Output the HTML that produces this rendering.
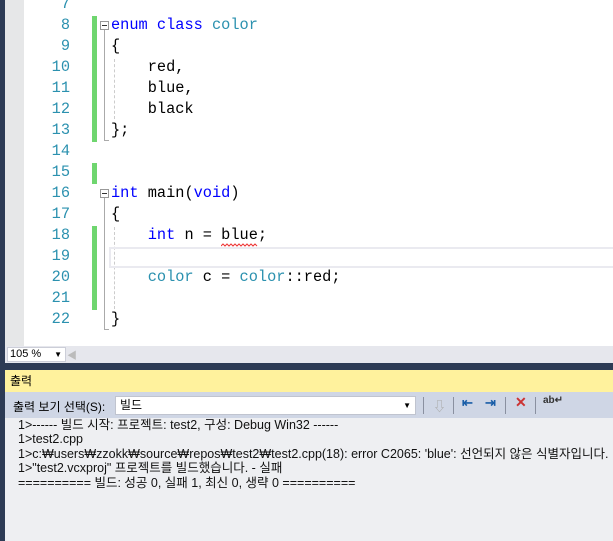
<!DOCTYPE html>
<html><head><meta charset="utf-8"><style>
*{margin:0;padding:0;box-sizing:border-box}
body{width:613px;height:541px;overflow:hidden;background:#2d3b55;position:relative;font-family:"Liberation Sans","Noto Sans CJK KR",sans-serif}
#ed{position:absolute;left:5px;top:0;width:608px;height:346px;background:#fff;overflow:hidden}
#gut{position:absolute;left:0;top:0;width:19px;height:346px;background:#e6e7e8}
.ln{position:absolute;left:19px;width:46px;text-align:right;font:15.3px "Liberation Mono",monospace;color:#2b91af;height:21px;line-height:21px}
.cd{position:absolute;left:106px;font:15.3px "Liberation Mono",monospace;color:#000;white-space:pre;height:21px;line-height:21px}
.k{color:#0000ff}.t{color:#2b91af}
.g{position:absolute;left:87px;width:5px;background:#6fd66f}
#zb{position:absolute;left:5px;top:346px;width:608px;height:17px;background:#e6e7ed}
#zbox{position:absolute;left:2px;top:1px;width:59px;height:15px;background:#fff;border:1px solid #ccced8;font-size:11px;line-height:13px;padding-left:2px}
#hd{position:absolute;left:5px;top:370px;width:608px;height:22px;background:#fff29d;font-size:12px;line-height:22px;padding-left:5px}
#tb{position:absolute;left:5px;top:392px;width:608px;height:26px;background:#cfd6e5;font-size:12px}
#out{position:absolute;left:5px;top:418px;width:608px;height:123px;background:#eeeff2;font:12.5px "Liberation Sans","Noto Sans CJK KR",sans-serif;color:#111}
#out div{position:absolute;left:13px;white-space:pre;height:14px;line-height:14px}
.sep{position:absolute;top:5px;width:1px;height:17px;background:#8a90a0}
</style></head><body>
<div id="ed">
<div id="gut"></div>
<div class="ln" style="top:-6px">7</div>
<div class="ln" style="top:15px">8</div>
<div class="ln" style="top:36px">9</div>
<div class="ln" style="top:57px">10</div>
<div class="ln" style="top:78px">11</div>
<div class="ln" style="top:99px">12</div>
<div class="ln" style="top:120px">13</div>
<div class="ln" style="top:141px">14</div>
<div class="ln" style="top:162px">15</div>
<div class="ln" style="top:183px">16</div>
<div class="ln" style="top:204px">17</div>
<div class="ln" style="top:225px">18</div>
<div class="ln" style="top:246px">19</div>
<div class="ln" style="top:267px">20</div>
<div class="ln" style="top:288px">21</div>
<div class="ln" style="top:309px">22</div>
<div class="g" style="top:16px;height:126px"></div>
<div class="g" style="top:163px;height:21px"></div>
<div class="g" style="top:226px;height:84px"></div>
<div style="position:absolute;left:95px;top:21px;width:9px;height:9px;border:1px solid #999;background:#fff"></div>
<div style="position:absolute;left:97px;top:25px;width:5px;height:1px;background:#333"></div>
<div style="position:absolute;left:99px;top:30px;width:1px;height:111px;background:#aaa"></div>
<div style="position:absolute;left:99px;top:140px;width:5px;height:1px;background:#aaa"></div>
<div style="position:absolute;left:95px;top:189px;width:9px;height:9px;border:1px solid #999;background:#fff"></div>
<div style="position:absolute;left:97px;top:193px;width:5px;height:1px;background:#333"></div>
<div style="position:absolute;left:99px;top:198px;width:1px;height:132px;background:#aaa"></div>
<div style="position:absolute;left:99px;top:329px;width:5px;height:1px;background:#aaa"></div>
<div style="position:absolute;left:109px;top:59px;width:0;height:60px;border-left:1px dashed #ccc"></div>
<div style="position:absolute;left:109px;top:227px;width:0;height:82px;border-left:1px dashed #ccc"></div>
<div style="position:absolute;left:104px;top:247px;width:510px;height:21px;border:2px solid #eaeaf0;border-right:none"></div>
<div class="cd" style="top:15px"><span class="k">enum</span> <span class="k">class</span> <span class="t">color</span></div>
<div class="cd" style="top:36px">{</div>
<div class="cd" style="top:57px">    red,</div>
<div class="cd" style="top:78px">    blue,</div>
<div class="cd" style="top:99px">    black</div>
<div class="cd" style="top:120px">};</div>
<div class="cd" style="top:183px"><span class="k">int</span> main(<span class="k">void</span>)</div>
<div class="cd" style="top:204px">{</div>
<div class="cd" style="top:225px">    <span class="k">int</span> n = blue;</div>
<svg style="position:absolute;left:216px;top:243px" width="37" height="4"><polyline points="0,3 2,1 4,3 6,1 8,3 10,1 12,3 14,1 16,3 18,1 20,3 22,1 24,3 26,1 28,3 30,1 32,3 34,1 36,3" fill="none" stroke="#e33" stroke-width="1"/></svg>
<div class="cd" style="top:267px">    <span class="t">color</span> c = <span class="t">color</span>::red;</div>
<div class="cd" style="top:309px">}</div>
</div>
<div id="zb"><div id="zbox">105 %<span style="position:absolute;right:3px;top:0;font-size:8px">▼</span></div><span style="position:absolute;left:62px;top:1px;color:#bbb;font-size:10px">◀</span></div>
<div id="hd">출력</div>
<div id="tb">
<span style="position:absolute;left:8px;top:6px">출력 보기 선택(S):</span>
<div style="position:absolute;left:110px;top:4px;width:301px;height:19px;background:#fff;border:1px solid #c0c4cf;padding-left:4px;line-height:17px">빌드<span style="position:absolute;right:4px;top:0;font-size:8px">▼</span></div>
<div class="sep" style="left:418px"></div>
<span style="position:absolute;left:428px;top:4px;color:#aaa;font-size:13px">⇩</span>
<div class="sep" style="left:448px"></div>
<span style="position:absolute;left:457px;top:3px;color:#1a5ea8;font-size:13px;font-weight:bold">⇤</span>
<span style="position:absolute;left:480px;top:3px;color:#1a5ea8;font-size:13px;font-weight:bold">⇥</span>
<div class="sep" style="left:500px"></div>
<span style="position:absolute;left:510px;top:2px;color:#c33;font-size:14px;font-weight:bold">✕</span>
<div class="sep" style="left:530px"></div>
<span style="position:absolute;left:538px;top:3px;font-size:10px;font-weight:bold;color:#333">ab↵</span>
</div>
<div id="out">
<div style="top:0">1&gt;------ 빌드 시작: 프로젝트: test2, 구성: Debug Win32 ------</div>
<div style="top:14px">1&gt;test2.cpp</div>
<div style="top:29px">1&gt;c:₩users₩zzokk₩source₩repos₩test2₩test2.cpp(18): error C2065: 'blue': 선언되지 않은 식별자입니다.</div>
<div style="top:43px">1&gt;"test2.vcxproj" 프로젝트를 빌드했습니다. - 실패</div>
<div style="top:58px">========== 빌드: 성공 0, 실패 1, 최신 0, 생략 0 ==========</div>
</div>
</body></html>
